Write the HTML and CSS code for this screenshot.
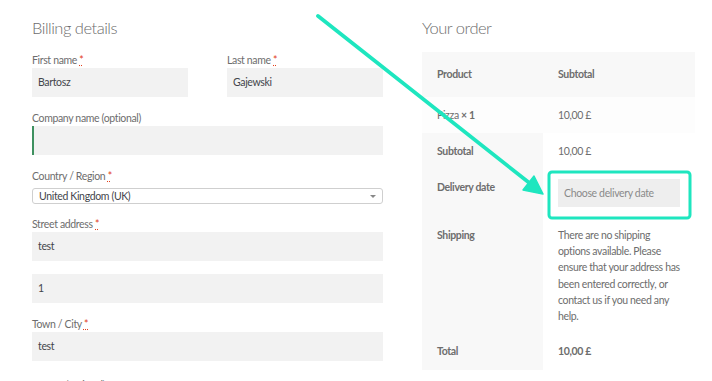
FILE: index.html
```html
<!DOCTYPE html>
<html>
<head>
<meta charset="utf-8">
<link rel="stylesheet" href="styles.css">
</head>
<body>
<div class="page">
  <section class="billing">
    <h3 class="title">Billing details</h3>
    <div class="row2">
      <div class="field">
        <div class="label">First name <abbr class="req">*</abbr></div>
        <div class="input">Bartosz</div>
      </div>
      <div class="field">
        <div class="label">Last name <abbr class="req">*</abbr></div>
        <div class="input">Gajewski</div>
      </div>
    </div>
    <div class="field">
      <div class="label">Company name (optional)</div>
      <div class="input valid"></div>
    </div>
    <div class="field field-select">
      <div class="label">Country / Region <abbr class="req">*</abbr></div>
      <div class="select"><span>United Kingdom (UK)</span><span class="caret"></span></div>
    </div>
    <div class="field">
      <div class="label">Street address <abbr class="req">*</abbr></div>
      <div class="input">test</div>
    </div>
    <div class="field">
      <div class="input">1</div>
    </div>
    <div class="field field-town">
      <div class="label">Town / City <abbr class="req">*</abbr></div>
      <div class="input">test</div>
    </div>
    <div class="field">
      <div class="label">County (optional)</div>
      <div class="input"></div>
    </div>
  </section>

  <section class="order">
    <h3 class="title">Your order</h3>
    <table class="review">
      <thead>
        <tr><th class="c1">Product</th><th class="c2">Subtotal</th></tr>
      </thead>
      <tbody>
        <tr class="item"><td class="c1">Pizza <strong class="qty">× 1</strong></td><td class="c2">10,00 £</td></tr>
      </tbody>
      <tfoot>
        <tr><th>Subtotal</th><td>10,00 £</td></tr>
        <tr><th>Delivery date</th><td><div class="date">Choose delivery date</div></td></tr>
        <tr><th>Shipping</th><td class="ship">There are no shipping<br>options available. Please<br>ensure that your address has<br>been entered correctly, or<br>contact us if you need any<br>help.</td></tr>
        <tr class="total"><th>Total</th><td><strong>10,00 £</strong></td></tr>
      </tfoot>
    </table>
  </section>

  <svg class="annot" width="712" height="381" viewBox="0 0 712 381">
    <line x1="318" y1="16" x2="532" y2="185" stroke="#1ee6bf" stroke-width="3.8" stroke-linecap="round"/>
    <polygon points="543,194 523,190 534,176" fill="#1ee6bf" stroke="#1ee6bf" stroke-width="1.5" stroke-linejoin="round"/>
    <rect x="549" y="172" width="141" height="46" rx="3" fill="none" stroke="#1ee6bf" stroke-width="3"/>
  </svg>
</div>
</body>
</html>
```

FILE: styles.css
```css
* { box-sizing: border-box; }
html, body { margin: 0; padding: 0; background: #fff; }
body {
  font-family: Lato, "Liberation Sans", sans-serif;
  font-size: 10.5px;
  letter-spacing: -0.35px;
  color: #6d6d6d;
  overflow: hidden;
}
.page {
  position: relative;
  width: 712px;
  height: 381px;
  display: grid;
  grid-template-columns: 351px 273px;
  column-gap: 39px;
  padding-left: 32px;
  align-items: start;
}
.title {
  margin: 0 0 12px;
  padding-top: 16px;
  font-size: 16.5px;
  letter-spacing: -0.5px;
  line-height: 24px;
  font-weight: 300;
  color: #6d6d6d;
}
.row2 {
  display: grid;
  grid-template-columns: 156px 156px;
  column-gap: 39px;
}
.field { margin: 0 0 13px; }
.label {
  line-height: 16px;
  color: #6d6d6d;
}
.req {
  color: #e2401c;
  text-decoration: underline dotted;
  border: 0;
}
.input {
  height: 29px;
  background: #f2f2f2;
  color: #43454b;
  padding: 0 6px;
  line-height: 29px;
}
.input.valid { border-left: 2px solid #3f9160; }
.field-select { margin-bottom: 12px; }
.field-town { margin-bottom: 16px; }
.select {
  margin-top: 4px;
  height: 16px;
  border: 1px solid #cfcfcf;
  border-radius: 3px;
  background: #fff;
  color: #43454b;
  padding: 0 6px;
  line-height: 14px;
  display: flex;
  justify-content: space-between;
  align-items: center;
}
.caret {
  width: 0; height: 0;
  border-left: 3px solid transparent;
  border-right: 3px solid transparent;
  border-top: 3px solid #888;
}

.review {
  width: 273px;
  border-collapse: collapse;
  table-layout: fixed;
}
.review th, .review td {
  text-align: left;
  vertical-align: top;
  padding: 10px 15px;
  line-height: 16px;
}
.review .c1 { width: 121px; }
.review thead th {
  background: #f8f8f8;
  font-weight: 700;
  padding: 14px 15px 15px;
}
.review tbody td { background: #fdfdfd; }
.qty { font-weight: 700; }
.review tfoot th {
  background: #f8f8f8;
  font-weight: 700;
}
.review tfoot td { background: #fff; }
.review .ship { line-height: 16.2px; white-space: nowrap; padding-right: 0; }
.review .total th, .review .total td { padding-top: 9px; padding-bottom: 11px; }
.date {
  height: 28px;
  background: #eee;
  color: #8a8a8a;
  padding: 0 6px;
  line-height: 28px;
  white-space: nowrap;
}
.annot {
  position: absolute;
  left: 0;
  top: 0;
  pointer-events: none;
}
```
